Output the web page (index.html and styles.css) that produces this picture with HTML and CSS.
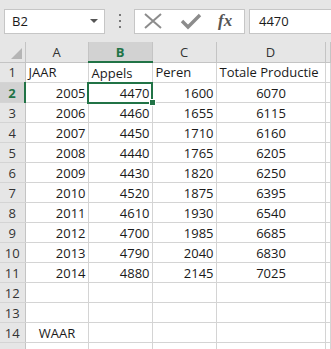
FILE: index.html
```html
<!DOCTYPE html>
<html lang="nl">
<head>
  <meta charset="UTF-8" />
  <title>Productie</title>
  <link rel="stylesheet" href="styles.css">
</head>
<body>

  <div class="formula-bar">
    <div class="name-box">
      <span>B2</span>
      <span class="drop"></span>
    </div>
    <div class="dots"><i></i><i></i><i></i></div>
    <div class="fx-box">
      <svg width="22" height="18" viewBox="0 0 22 18"><path d="M3 2 L19 16 M19 2 L3 16" stroke="#8c8c8c" stroke-width="2" fill="none"/></svg>
      <svg width="22" height="18" viewBox="0 0 22 18"><path d="M2 9 L8 15 L20 3" stroke="#8c8c8c" stroke-width="3.4" fill="none"/></svg>
      <span class="fx">fx</span>
    </div>
    <div class="value-box">4470</div>
  </div>

  <table class="sheet">
    <colgroup>
      <col class="c-hdr"><col class="c-a"><col class="c-b"><col class="c-c"><col class="c-d"><col>
    </colgroup>
    <tr class="col-heads">
      <th class="corner"><span class="tri"></span></th>
      <th>A</th><th class="sel">B</th><th>C</th><th>D</th><th></th>
    </tr>
    <tr><th>1</th><td>JAAR</td><td>Appels</td><td>Peren</td><td>Totale Productie</td><td></td></tr>
    <tr><th class="sel-row">2</th><td class="r">2005</td><td class="r active">4470<span class="handle"></span></td><td class="r">1600</td><td class="m">6070</td><td></td></tr>
    <tr><th>3</th><td class="r">2006</td><td class="r">4460</td><td class="r">1655</td><td class="m">6115</td><td></td></tr>
    <tr><th>4</th><td class="r">2007</td><td class="r">4450</td><td class="r">1710</td><td class="m">6160</td><td></td></tr>
    <tr><th>5</th><td class="r">2008</td><td class="r">4440</td><td class="r">1765</td><td class="m">6205</td><td></td></tr>
    <tr><th>6</th><td class="r">2009</td><td class="r">4430</td><td class="r">1820</td><td class="m">6250</td><td></td></tr>
    <tr><th>7</th><td class="r">2010</td><td class="r">4520</td><td class="r">1875</td><td class="m">6395</td><td></td></tr>
    <tr><th>8</th><td class="r">2011</td><td class="r">4610</td><td class="r">1930</td><td class="m">6540</td><td></td></tr>
    <tr><th>9</th><td class="r">2012</td><td class="r">4700</td><td class="r">1985</td><td class="m">6685</td><td></td></tr>
    <tr><th>10</th><td class="r">2013</td><td class="r">4790</td><td class="r">2040</td><td class="m">6830</td><td></td></tr>
    <tr><th>11</th><td class="r">2014</td><td class="r">4880</td><td class="r">2145</td><td class="m">7025</td><td></td></tr>
    <tr><th>12</th><td></td><td></td><td></td><td></td><td></td></tr>
    <tr><th>13</th><td></td><td></td><td></td><td></td><td></td></tr>
    <tr><th>14</th><td class="m">WAAR</td><td></td><td></td><td></td><td></td></tr>
    <tr><th>15</th><td></td><td></td><td></td><td></td><td></td></tr>
  </table>

</body>
</html>
```

FILE: styles.css
```css
body {
  margin: 0;
  padding: 0;
  background-color: #fff;
  font-family: 'Open Sans', 'Liberation Sans', sans-serif;
  font-size: 13px;
  color: #1a1a1a;
  overflow: hidden;
}

.formula-bar {
  display: flex;
  align-items: center;
  height: 42px;
  padding: 0 0 0 4px;
  background-color: #e6e6e6;
  box-sizing: border-box;
}

.name-box {
  display: flex;
  align-items: center;
  justify-content: space-between;
  width: 101px;
  height: 25px;
  padding: 0 6px 0 7px;
  box-sizing: border-box;
  background-color: #fff;
  border: 1px solid #c6c6c6;
}

.drop {
  width: 0;
  height: 0;
  border-left: 4px solid transparent;
  border-right: 4px solid transparent;
  border-top: 4px solid #555;
}

.dots {
  display: flex;
  flex-direction: column;
  gap: 4px;
  margin: 0 13px 0 14px;
}

.dots i {
  display: block;
  width: 2px;
  height: 2px;
  background-color: #777;
}

.fx-box {
  display: flex;
  align-items: center;
  gap: 16px;
  width: 111px;
  height: 25px;
  padding-left: 7px;
  box-sizing: border-box;
  background-color: #fff;
  border: 1px solid #c6c6c6;
}

.fx {
  font-family: 'Liberation Serif', serif;
  font-style: italic;
  font-weight: bold;
  font-size: 17px;
  color: #555;
}

.value-box {
  flex: 1;
  height: 25px;
  margin-left: 4px;
  padding-left: 9px;
  line-height: 23px;
  box-sizing: border-box;
  background-color: #fff;
  border: 1px solid #c6c6c6;
  border-right: none;
}

.sheet {
  border-collapse: collapse;
  table-layout: fixed;
  width: 331px;
}

.c-hdr { width: 25px; }
.c-a { width: 63px; }
.c-b { width: 64px; }
.c-c { width: 64px; }
.c-d { width: 109px; }

.sheet th {
  height: 19px;
  padding: 0;
  font-weight: normal;
  color: #333;
  background-color: #e6e6e6;
  border: 1px solid #c4c4c4;
  text-align: center;
}

.sheet tr:not(.col-heads) th {
  border-left: none;
  border-right: 1px solid #c4c4c4;
  border-top: none;
  border-bottom: 1px solid #d4d4d4;
}

.col-heads th {
  border-top: none;
  border-bottom: 1px solid #c4c4c4;
}

.corner {
  position: relative;
  border-left: none !important;
}

.tri {
  position: absolute;
  right: 3px;
  bottom: 3px;
  width: 0;
  height: 0;
  border-left: 11px solid transparent;
  border-bottom: 11px solid #b5b5b5;
}

.col-heads th.sel {
  background-color: #d2d2d2;
  color: #217346;
  font-weight: bold;
  border-bottom: 2px solid #217346;
}

.sheet tr th.sel-row {
  background-color: #d2d2d2;
  color: #217346;
  font-weight: bold;
  border-right: 2px solid #217346;
}

.sheet td {
  height: 19px;
  padding: 0 2px 0 3px;
  line-height: 18px;
  border: 1px solid #d4d4d4;
  white-space: nowrap;
  overflow: visible;
}

.r { text-align: right; }
.m { text-align: center; }

.active {
  position: relative;
  outline: 2px solid #217346;
  outline-offset: -1px;
}

.handle {
  position: absolute;
  right: -4px;
  bottom: -4px;
  width: 5px;
  height: 5px;
  background-color: #217346;
  border: 1px solid #fff;
}
```
